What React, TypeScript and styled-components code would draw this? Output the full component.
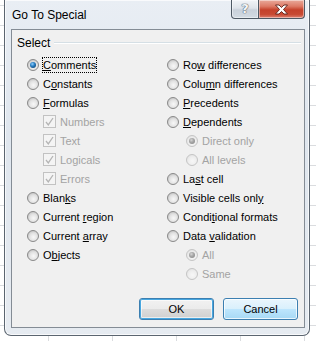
import React, { useId } from 'react';
import styled, { createGlobalStyle } from 'styled-components';

const GlobalStyle = createGlobalStyle`
  html, body {
    margin: 0;
    padding: 0;
  }
  body {
    font-family: "Liberation Sans", Arial, sans-serif;
    background-color: #ffffff;
    background-image:
      linear-gradient(#dadcdf 1px, transparent 1px),
      linear-gradient(90deg, #dadcdf 1px, transparent 1px);
    background-size: 64px 20px;
    background-position: 48px 5px;
  }
`;

const Screen = styled.div`
  width: 316px;
  height: 341px;
  overflow: hidden;
`;

const Window = styled.div`
  box-sizing: border-box;
  margin-left: 4px;
  width: 306px;
  height: 336px;
  border: 1px solid #5b6570;
  border-top: none;
  border-radius: 0 0 7px 7px;
  background: linear-gradient(180deg, #e9eef4 0%, #dfe6ee 40%, #e6ebf1 100%);
  box-shadow: inset 0 0 0 1px rgba(255, 255, 255, 0.7);
  display: flex;
  flex-direction: column;
`;

const TitleBar = styled.div`
  height: 29px;
  display: flex;
  align-items: flex-start;
  padding-left: 7px;
`;

const Title = styled.div`
  margin-top: 7px;
  font-size: 12px;
  line-height: 16px;
  color: #000;
`;

const Captions = styled.div`
  margin-left: auto;
  margin-right: 4px;
  display: flex;
`;

const CaptionButton = styled.div<{ $close?: boolean }>`
  box-sizing: border-box;
  width: ${(p) => (p.$close ? 46 : 28)}px;
  height: 19px;
  border: 1px solid #4e5964;
  border-top: none;
  border-radius: ${(p) => (p.$close ? '0 0 4px 0' : '0 0 0 4px')};
  ${(p) => (p.$close ? 'border-left: none;' : '')}
  background: ${(p) =>
    p.$close
      ? 'linear-gradient(180deg, #e9a99b 0%, #dd7a66 35%, #c5412b 55%, #c84a33 80%, #dd8070 100%)'
      : 'linear-gradient(180deg, #f1f4f7 0%, #dfe4ea 45%, #c9d1da 55%, #d3dbe3 100%)'};
  box-shadow: inset 0 0 0 1px rgba(255, 255, 255, 0.45);
  display: flex;
  align-items: center;
  justify-content: center;
`;

const HelpGlyph = styled.span`
  font-family: "DejaVu Sans", sans-serif;
  font-size: 13px;
  font-weight: bold;
  color: #f4f6f8;
  line-height: 1;
  margin-top: -1px;
  text-shadow: 0 0 1px #5a6570, 0 0 1px #5a6570, 0 0 1px #5a6570;
`;

const Client = styled.div`
  flex: 1;
  margin: 0 4px 7px 6px;
  border: 1px solid #848c95;
  background: #f0f0f0;
  display: flex;
  flex-direction: column;
`;

const GroupHeader = styled.div`
  margin-top: 6px;
  height: 14px;
  display: flex;
  align-items: center;
  padding: 0 3px 0 5px;
  font-size: 12px;
`;

const GroupRule = styled.div`
  flex: 1;
  height: 0;
  margin-left: 4px;
  border-top: 1px solid #d5dfe5;
  border-bottom: 1px solid #ffffff;
`;

const Columns = styled.div`
  margin-top: 5px;
  padding-left: 15px;
  display: grid;
  grid-template-columns: 140px 1fr;
`;

const Column = styled.div`
  display: flex;
  flex-direction: column;
`;

const Row = styled.div<{ $indent?: number }>`
  height: 19px;
  display: flex;
  align-items: center;
  padding-left: ${(p) => p.$indent || 0}px;
`;

const Label = styled.span<{ $disabled?: boolean; $focus?: boolean }>`
  margin-left: 3px;
  border: 1px dotted ${(p) => (p.$focus ? '#000' : 'transparent')};
  line-height: 14px;
  font-size: 11px;
  color: ${(p) => (p.$disabled ? '#a3a3a3' : '#000')};
  white-space: nowrap;

  u {
    text-decoration: underline;
    text-underline-offset: 1px;
  }
`;

const Footer = styled.div`
  margin-top: auto;
  display: flex;
  justify-content: flex-end;
  gap: 9px;
  padding: 0 6px 7px 0;
`;

const Button = styled.button<{ $hot?: boolean; $default?: boolean }>`
  box-sizing: border-box;
  width: 75px;
  height: 22px;
  padding: 0;
  font-family: "Liberation Sans", Arial, sans-serif;
  font-size: 11px;
  color: #000;
  border-radius: 3px;
  border: 1px solid ${(p) => (p.$hot || p.$default ? '#3c7fb1' : '#707070')};
  background: ${(p) =>
    p.$hot
      ? 'linear-gradient(180deg, #eaf6fd 0%, #d9f0fc 50%, #bee6fd 50%, #a7d9f5 100%)'
      : 'linear-gradient(180deg, #f2f2f2 0%, #ebebeb 50%, #dddddd 50%, #cfcfcf 100%)'};
  box-shadow: ${(p) =>
    p.$default
      ? 'inset 0 0 0 1px #48a7e0, inset 0 0 0 2px rgba(255,255,255,0.6)'
      : 'inset 0 0 0 1px rgba(255,255,255,0.75)'};
`;

function Radio({ checked, disabled }: { checked?: boolean; disabled?: boolean }) {
  const id = useId().replace(/:/g, '');
  const ring = disabled ? '#c4c4c4' : '#8a8a8a';
  return (
    <svg width="12" height="12" viewBox="0 0 12 12">
      <defs>
        <radialGradient id={`f${id}`} cx="0.55" cy="0.6" r="0.6">
          <stop offset="0" stopColor={disabled ? '#f7f7f7' : '#f8f8f8'} />
          <stop offset="0.6" stopColor={disabled ? '#eeeeee' : '#e2e2e2'} />
          <stop offset="1" stopColor={disabled ? '#e2e2e2' : '#c4c4c4'} />
        </radialGradient>
        <radialGradient id={`d${id}`} cx="0.4" cy="0.35" r="0.7">
          <stop offset="0" stopColor={disabled ? '#d6d6d6' : '#8fd0ff'} />
          <stop offset="0.5" stopColor={disabled ? '#a8a8a8' : '#2a7fc4'} />
          <stop offset="1" stopColor={disabled ? '#8f8f8f' : '#0d4a7e'} />
        </radialGradient>
      </defs>
      <circle cx="6" cy="6" r="5.5" fill={`url(#f${id})`} stroke={ring} strokeWidth="1" />
      {checked && <circle cx="6" cy="6" r="3" fill={`url(#d${id})`} />}
    </svg>
  );
}

function Check() {
  return (
    <svg width="13" height="13" viewBox="0 0 13 13">
      <rect x="0.5" y="0.5" width="12" height="12" fill="#f4f4f4" stroke="#c2c2c2" />
      <path d="M3 7 L5.3 9.8 L10 3" fill="none" stroke="#b4b4b4" strokeWidth="1.3" />
    </svg>
  );
}

function CloseX() {
  return (
    <svg width="15" height="11" viewBox="0 0 15 11">
      <path
        d="M1.5 1 H5 L7.5 3.5 L10 1 H13.5 L9.5 5.5 L13.5 10 H10 L7.5 7.5 L5 10 H1.5 L5.5 5.5 Z"
        fill="#ffffff"
        stroke="#5a2018"
        strokeWidth="0.9"
        strokeLinejoin="round"
      />
    </svg>
  );
}

type Opt = {
  label: React.ReactNode;
  kind?: 'radio' | 'check';
  checked?: boolean;
  disabled?: boolean;
  focus?: boolean;
  indent?: number;
};

const leftOptions: Opt[] = [
  { label: <><u>C</u>omments</>, checked: true, focus: true },
  { label: <>C<u>o</u>nstants</> },
  { label: <><u>F</u>ormulas</> },
  { label: 'Numbers', kind: 'check', disabled: true, indent: 16 },
  { label: 'Text', kind: 'check', disabled: true, indent: 16 },
  { label: 'Logicals', kind: 'check', disabled: true, indent: 16 },
  { label: 'Errors', kind: 'check', disabled: true, indent: 16 },
  { label: <>Blan<u>k</u>s</> },
  { label: <>Current <u>r</u>egion</> },
  { label: <>Current <u>a</u>rray</> },
  { label: <>O<u>b</u>jects</> },
];

const rightOptions: Opt[] = [
  { label: <>Ro<u>w</u> differences</> },
  { label: <>Colu<u>m</u>n differences</> },
  { label: <><u>P</u>recedents</> },
  { label: <><u>D</u>ependents</> },
  { label: 'Direct only', checked: true, disabled: true, indent: 19 },
  { label: 'All levels', disabled: true, indent: 19 },
  { label: <>La<u>s</u>t cell</> },
  { label: <>Visible cells onl<u>y</u></> },
  { label: <>Condi<u>t</u>ional formats</> },
  { label: <>Data <u>v</u>alidation</> },
  { label: 'All', checked: true, disabled: true, indent: 19 },
  { label: 'Same', disabled: true, indent: 19 },
];

function OptionList({ items }: { items: Opt[] }) {
  return (
    <Column>
      {items.map((o, i) => (
        <Row key={i} $indent={o.indent}>
          {o.kind === 'check' ? <Check /> : <Radio checked={o.checked} disabled={o.disabled} />}
          <Label $disabled={o.disabled} $focus={o.focus}>
            {o.label}
          </Label>
        </Row>
      ))}
    </Column>
  );
}

export default function App() {
  return (
    <Screen>
      <GlobalStyle />
      <Window>
        <TitleBar>
          <Title>Go To Special</Title>
          <Captions>
            <CaptionButton>
              <HelpGlyph>?</HelpGlyph>
            </CaptionButton>
            <CaptionButton $close>
              <CloseX />
            </CaptionButton>
          </Captions>
        </TitleBar>
        <Client>
          <GroupHeader>
            Select
            <GroupRule />
          </GroupHeader>
          <Columns>
            <OptionList items={leftOptions} />
            <OptionList items={rightOptions} />
          </Columns>
          <Footer>
            <Button $default>OK</Button>
            <Button $hot>Cancel</Button>
          </Footer>
        </Client>
      </Window>
    </Screen>
  );
}
